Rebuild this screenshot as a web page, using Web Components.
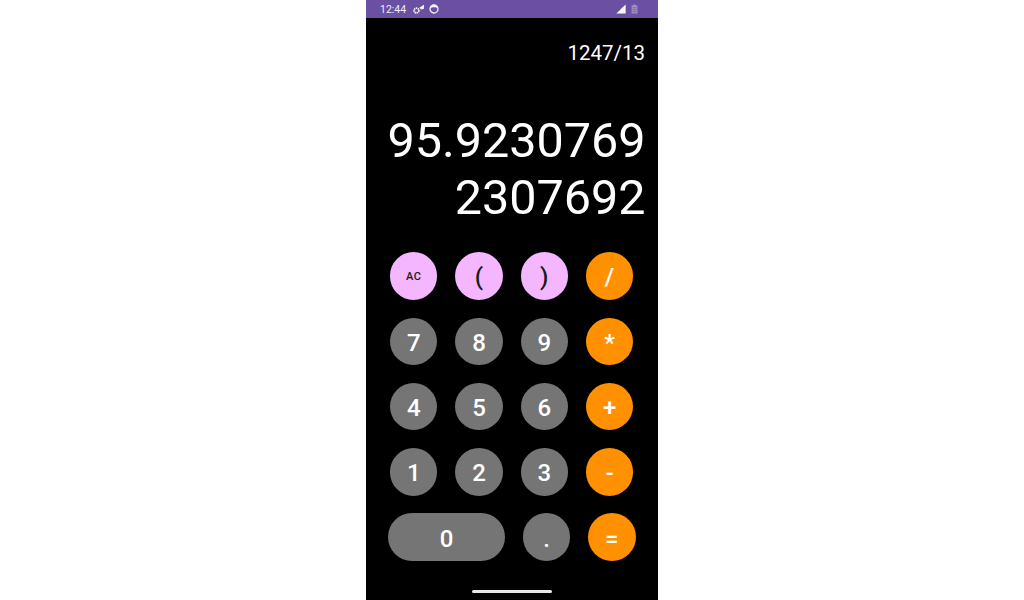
<!DOCTYPE html>
<html>
<head>
<meta charset="utf-8">
<title>Calculator</title>
<style>
  html, body { margin: 0; height: 100%; background: #fff; }
  body { display: flex; justify-content: center; font-family: Roboto, sans-serif; }
  .pad { display: block; margin-top: 26.3px; }
</style>
</head>
<body>
<calc-phone>
  <status-bar slot="status"></status-bar>
  <calc-display expr="1247/13" result="95.9230769&#10;2307692"></calc-display>
  <div class="pad" slot="pad">
    <key-row>
      <calc-key kind="fn" small>AC</calc-key>
      <calc-key kind="fn">(</calc-key>
      <calc-key kind="fn">)</calc-key>
      <calc-key kind="op">/</calc-key>
    </key-row>
    <key-row>
      <calc-key>7</calc-key><calc-key>8</calc-key><calc-key>9</calc-key>
      <calc-key kind="op">*</calc-key>
    </key-row>
    <key-row>
      <calc-key>4</calc-key><calc-key>5</calc-key><calc-key>6</calc-key>
      <calc-key kind="op">+</calc-key>
    </key-row>
    <key-row>
      <calc-key>1</calc-key><calc-key>2</calc-key><calc-key>3</calc-key>
      <calc-key kind="op">-</calc-key>
    </key-row>
    <key-row last>
      <calc-key wide>0</calc-key>
      <calc-key>.</calc-key>
      <calc-key kind="op">=</calc-key>
    </key-row>
  </div>
</calc-phone>

<script>
class CalcPhone extends HTMLElement {
  constructor() {
    super();
    this.attachShadow({ mode: 'open' }).innerHTML = `
      <style>
        :host { display: flex; flex-direction: column; width: 292px; height: 600px; background: #000; color: #fff; }
        .home { display: flex; justify-content: center; margin-top: auto; padding-bottom: 7px; }
        .home i { display: block; width: 80px; height: 3px; border-radius: 2px; background: #e8e8e8; }
      </style>
      <slot name="status"></slot>
      <slot></slot>
      <slot name="pad"></slot>
      <div class="home"><i></i></div>`;
  }
}

class StatusBar extends HTMLElement {
  constructor() {
    super();
    this.attachShadow({ mode: 'open' }).innerHTML = `
      <style>
        :host { display: flex; align-items: center; height: 18px; padding: 0 20px 0 14px; background: #6a4fa3; color: #f1edf8; font: 400 10.5px Roboto, sans-serif; }
        span { width: 33px; }
        svg { display: block; }
        .left { margin-right: 4px; }
        .gap { flex: 1; }
      </style>
      <span>12:44</span>
      <svg class="left" width="12" height="10" viewBox="0 0 12 10" fill="#f4f1fa">
        <circle cx="3.5" cy="6.5" r="2.4" fill="none" stroke="#f4f1fa" stroke-width="1.7" stroke-dasharray="1.4 .5"/>
        <path d="M6.5 3.4 11 .8V4.8L8 5.4Z"/>
      </svg>
      <svg width="10" height="10" viewBox="0 0 10 10">
        <circle cx="5" cy="5" r="4" fill="none" stroke="#f4f1fa" stroke-width="1.3"/>
        <path d="M1.5 4.2C3 2.8 7 2.8 8.5 4.2V2.5L5 .8 1.5 2.5Z" fill="#f4f1fa"/>
      </svg>
      <div class="gap"></div>
      <svg width="10" height="10" viewBox="0 0 10 10" style="margin-right:5px">
        <path d="M9.6 .4V9.6H.4Z" fill="#fff"/>
        <path d="M7.2 3V9.6" stroke="#d8d0ea" stroke-width=".5"/>
      </svg>
      <svg width="7" height="10" viewBox="0 0 7 10">
        <path d="M2.4 .5H4.6V1.5H6.4V9.5H.6V1.5H2.4Z" fill="#a594cc"/>
        <path d="M1.4 3.8H5.6M1.4 5.8H5.6M1.4 7.8H5.6" stroke="#6a4fa3" stroke-width=".7"/>
      </svg>`;
  }
}

class CalcDisplay extends HTMLElement {
  constructor() {
    super();
    this.attachShadow({ mode: 'open' }).innerHTML = `
      <style>
        :host { display: block; padding: 0 13px 0 13px; text-align: right; font-family: Roboto, sans-serif; color: #fff; }
        .expr { font-size: 20.5px; line-height: 25px; padding-top: 23px; }
        .result { font-size: 48.5px; line-height: 57px; padding-top: 46px; margin-right: -.6px; white-space: pre-line; }
      </style>
      <div class="expr"></div>
      <div class="result"></div>`;
  }
  connectedCallback() {
    this.shadowRoot.querySelector('.expr').textContent = this.getAttribute('expr');
    this.shadowRoot.querySelector('.result').textContent = this.getAttribute('result');
  }
}

class KeyRow extends HTMLElement {
  constructor() {
    super();
    this.attachShadow({ mode: 'open' }).innerHTML = `
      <style>
        :host { display: flex; gap: 17.9px; padding-left: 24px; margin-bottom: 17.9px; }
        :host([last]) { padding-left: 22px; margin-bottom: 0; }
      </style>
      <slot></slot>`;
  }
}

class CalcKey extends HTMLElement {
  constructor() {
    super();
    this.attachShadow({ mode: 'open' }).innerHTML = `
      <style>
        :host { display: flex; align-items: center; justify-content: center; flex: none; box-sizing: border-box; width: 47.4px; height: 47.4px; padding-top: 3px; border-radius: 24px; background: #757575; color: #fff; font: 500 24px Roboto, sans-serif; }
        :host([kind="fn"]) { background: #f3b6ff; color: #1a1a1a; }
        :host([kind="op"]) { background: #ff9100; }
        :host([small]) { padding-top: 1px; font-size: 11px; letter-spacing: .6px; }
        :host([wide]) { width: 117px; }
      </style>
      <slot></slot>`;
  }
}

customElements.define('calc-phone', CalcPhone);
customElements.define('status-bar', StatusBar);
customElements.define('calc-display', CalcDisplay);
customElements.define('key-row', KeyRow);
customElements.define('calc-key', CalcKey);
</script>
</body>
</html>
